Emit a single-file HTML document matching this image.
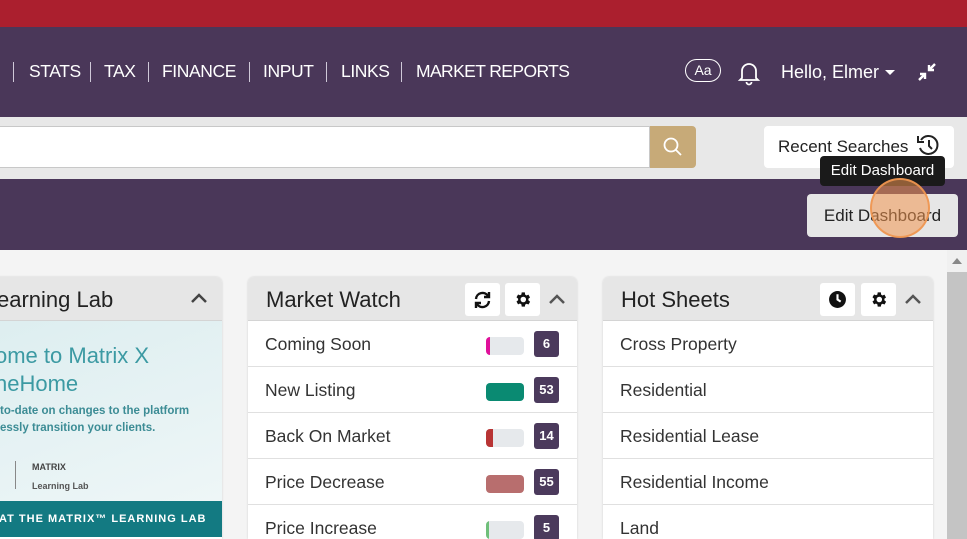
<!DOCTYPE html>
<html><head><meta charset="utf-8"><style>
*{box-sizing:border-box;margin:0;padding:0}
body{width:967px;height:539px;overflow:hidden;position:relative;background:#f4f4f4;font-family:"Liberation Sans",sans-serif;color:#333}
.a{position:absolute}
.nv{position:absolute;color:#fff;font-size:17.5px;top:61px;white-space:nowrap;letter-spacing:-0.4px}
.sp{position:absolute;top:62px;width:1px;height:20px;background:#cfc8d8}
.card{background:#fff;border-radius:6px 6px 0 0;overflow:hidden;box-shadow:0 0 2px rgba(0,0,0,.15)}
.hd{height:44px;background:#e6e6e6;border-bottom:1px solid #d4d4d4;position:relative}
.hd .t{position:absolute;left:18px;top:10px;font-size:22px;color:#222}
.ib{position:absolute;top:6px;width:35px;height:33px;background:#fff;border-radius:3px}
.row{height:46px;border-bottom:1px solid #e0e0e0;position:relative;font-size:17.5px;color:#333}
.row span.l{position:absolute;left:17px;top:13px}
.bar{position:absolute;left:238px;top:16px;width:38px;height:18px;border-radius:4px;background:#e6e9ec;overflow:hidden}
.bdg{position:absolute;right:18px;top:10px;height:26px;min-width:25px;padding:0 5px;border-radius:3px;background:#4b3a5c;color:#fff;font-size:13px;font-weight:bold;text-align:center;line-height:26px}
</style></head><body>
<div class="a" style="left:0;top:0;width:967px;height:27px;background:#ab1f2e"></div>
<div class="a" style="left:0;top:27px;width:967px;height:90px;background:#4a3759"></div>
<div class="sp" style="left:13px"></div><div class="nv" style="left:29px">STATS</div>
<div class="sp" style="left:90px"></div><div class="nv" style="left:104px">TAX</div>
<div class="sp" style="left:148px"></div><div class="nv" style="left:162px">FINANCE</div>
<div class="sp" style="left:249px"></div><div class="nv" style="left:263px">INPUT</div>
<div class="sp" style="left:326px"></div><div class="nv" style="left:341px">LINKS</div>
<div class="sp" style="left:401px"></div><div class="nv" style="left:416px;letter-spacing:-0.6px">MARKET REPORTS</div>
<div class="a" style="left:685px;top:59px;width:36px;height:23px;border:1.5px solid #fff;border-radius:12px;color:#fff;font-size:14px;text-align:center;line-height:20px">Aa</div>
<svg class="a" style="left:737px;top:60px" width="24" height="26" viewBox="0 0 24 26"><path d="M5 18V11a7 7 0 0 1 14 0v7l2 2H3z" fill="none" stroke="#fff" stroke-width="1.8"/><path d="M9.5 22a2.5 2.5 0 0 0 5 0" fill="none" stroke="#fff" stroke-width="1.8"/></svg>
<div class="a" style="left:781px;top:62px;color:#fff;font-size:18px">Hello, Elmer</div>
<div class="a" style="left:885px;top:70px;border-left:5px solid transparent;border-right:5px solid transparent;border-top:5px solid #fff"></div>
<svg class="a" style="left:918px;top:63px" width="18" height="18" viewBox="0 0 18 18"><path d="M17 1l-6 6M11 2v5h5M1 17l6-6M2 11h5v5" stroke="#fff" stroke-width="2.4" fill="none"/></svg>
<div class="a" style="left:0;top:117px;width:967px;height:62px;background:#e8e8e8"></div>
<div class="a" style="left:-4px;top:126px;width:654px;height:42px;background:#fff;border:1px solid #c8c8c8"></div>
<div class="a" style="left:650px;top:126px;width:46px;height:42px;background:#c7aa78;border-radius:0 4px 4px 0"></div>
<svg class="a" style="left:662px;top:136px" width="22" height="22" viewBox="0 0 22 22"><circle cx="9" cy="9" r="6.5" fill="none" stroke="#fff" stroke-width="1.8"/><path d="M14 14l5 5" stroke="#fff" stroke-width="1.8"/></svg>
<div class="a" style="left:764px;top:126px;width:190px;height:42px;background:#fff;border-radius:4px"></div>
<div class="a" style="left:778px;top:137px;font-size:17px;color:#222">Recent Searches</div>
<svg class="a" style="left:915px;top:133px" width="26" height="24" viewBox="0 0 26 24"><path d="M6 7a9 9 0 1 1-1 8" fill="none" stroke="#222" stroke-width="2"/><path d="M3 3v6h6" fill="none" stroke="#222" stroke-width="2"/><path d="M14 7v6l3 3" fill="none" stroke="#222" stroke-width="2"/></svg>
<div class="a" style="left:0;top:179px;width:967px;height:71px;background:#4a3759"></div>
<div class="a" style="left:807px;top:194px;width:151px;height:43px;background:#e6e6e6;border-radius:4px;font-size:17px;color:#222;line-height:43px;text-align:center">Edit Dashboard</div>
<div class="a" style="left:820px;top:156px;width:125px;height:30px;background:#1a1a1a;border-radius:4px;color:#fff;font-size:15px;line-height:30px;text-align:center">Edit Dashboard</div>
<div class="a" style="left:870px;top:178px;width:60px;height:60px;border-radius:50%;background:rgba(240,150,80,.55);border:2px solid rgba(240,150,80,.9)"></div>
<div class="a" style="left:947px;top:250px;width:20px;height:289px;background:#c4c4c4"></div>
<div class="a" style="left:947px;top:250px;width:20px;height:22px;background:#f0f0f0"></div>
<div class="a" style="left:952px;top:258px;border-left:5px solid transparent;border-right:5px solid transparent;border-bottom:6px solid #888"></div>

<!-- Learning lab -->
<div class="a card" style="left:-10px;top:277px;width:232px;height:262px">
<div class="hd"><div class="t" style="left:7px">earning Lab</div>
<svg class="a" style="left:200px;top:15px" width="18" height="12" viewBox="0 0 18 12"><path d="M2 10l7-7 7 7" fill="none" stroke="#444" stroke-width="2.5"/></svg></div>
<div style="position:absolute;top:44px;left:0;width:232px;height:180px;background:linear-gradient(160deg,#ddeef0,#eef6f7)"></div>
<div class="a" style="left:5px;top:65px;font-size:22px;color:#3c9aa3;line-height:28px;white-space:nowrap">ome to Matrix X<br>neHome</div>
<div class="a" style="left:10px;top:126px;font-size:11.5px;font-weight:bold;color:#3c8c95;line-height:17px;white-space:nowrap">to-date on changes to the platform<br>essly transition your clients.</div>
<div class="a" style="left:25px;top:184px;width:1px;height:28px;background:#888"></div>
<div class="a" style="left:42px;top:185px;font-size:9px;font-weight:bold;color:#444">MATRIX</div>
<div class="a" style="left:42px;top:204px;font-size:9px;font-weight:bold;color:#555">Learning Lab</div>
<div class="a" style="left:0;top:224px;width:232px;height:36px;background:#137a82;color:#fff;font-size:11px;font-weight:bold;letter-spacing:1px;line-height:36px;padding-left:9px;white-space:nowrap">AT THE MATRIX™ LEARNING LAB</div>
</div>

<!-- Market watch -->
<div class="a card" style="left:248px;top:277px;width:329px;height:262px">
<div class="hd"><div class="t">Market Watch</div>
<div class="ib" style="left:217px"><svg style="margin:8px 8px" width="19" height="18" viewBox="0 0 19 18"><path d="M3 8a6.5 6.5 0 0 1 12-3M16 10a6.5 6.5 0 0 1-12 3" fill="none" stroke="#111" stroke-width="2.4"/><path d="M16 1v5h-5M3 17v-5h5" fill="none" stroke="#111" stroke-width="2.4"/></svg></div>
<div class="ib" style="left:257px"><svg style="margin:7px 8px" width="19" height="19" viewBox="0 0 24 24"><path fill="#111" d="M19.4 13a7.5 7.5 0 0 0 0-2l2.1-1.6-2-3.5-2.5 1a7 7 0 0 0-1.7-1L15 3h-4l-.4 2.7a7 7 0 0 0-1.7 1l-2.5-1-2 3.5L6.5 11a7.5 7.5 0 0 0 0 2l-2.1 1.6 2 3.5 2.5-1a7 7 0 0 0 1.7 1L11 21h4l.4-2.7a7 7 0 0 0 1.7-1l2.5 1 2-3.5zM13 15.5a3.5 3.5 0 1 1 0-7 3.5 3.5 0 0 1 0 7z"/></svg></div>
<svg class="a" style="left:300px;top:16px" width="18" height="12" viewBox="0 0 18 12"><path d="M2 10l7-7 7 7" fill="none" stroke="#555" stroke-width="2.5"/></svg></div>
<div class="row"><span class="l">Coming Soon</span><div class="bar"><div style="width:4px;height:18px;background:#e0109a"></div></div><div class="bdg">6</div></div>
<div class="row"><span class="l">New Listing</span><div class="bar" style="background:#0a8a72"></div><div class="bdg">53</div></div>
<div class="row"><span class="l">Back On Market</span><div class="bar"><div style="width:7px;height:18px;background:#b83434"></div></div><div class="bdg">14</div></div>
<div class="row"><span class="l">Price Decrease</span><div class="bar" style="background:#b86e6e"></div><div class="bdg">55</div></div>
<div class="row"><span class="l">Price Increase</span><div class="bar"><div style="width:3px;height:18px;background:#6fbf7a"></div></div><div class="bdg">5</div></div>
</div>

<!-- Hot sheets -->
<div class="a card" style="left:603px;top:277px;width:330px;height:262px">
<div class="hd"><div class="t">Hot Sheets</div>
<div class="ib" style="left:217px"><svg style="margin:7px 8px" width="19" height="19" viewBox="0 0 18 18"><circle cx="9" cy="9" r="8" fill="#111"/><path d="M9 4v5l3 2" stroke="#fff" stroke-width="2" fill="none"/></svg></div>
<div class="ib" style="left:258px"><svg style="margin:7px 8px" width="19" height="19" viewBox="0 0 24 24"><path fill="#111" d="M19.4 13a7.5 7.5 0 0 0 0-2l2.1-1.6-2-3.5-2.5 1a7 7 0 0 0-1.7-1L15 3h-4l-.4 2.7a7 7 0 0 0-1.7 1l-2.5-1-2 3.5L6.5 11a7.5 7.5 0 0 0 0 2l-2.1 1.6 2 3.5 2.5-1a7 7 0 0 0 1.7 1L11 21h4l.4-2.7a7 7 0 0 0 1.7-1l2.5 1 2-3.5zM13 15.5a3.5 3.5 0 1 1 0-7 3.5 3.5 0 0 1 0 7z"/></svg></div>
<svg class="a" style="left:301px;top:16px" width="18" height="12" viewBox="0 0 18 12"><path d="M2 10l7-7 7 7" fill="none" stroke="#555" stroke-width="2.5"/></svg></div>
<div class="row"><span class="l">Cross Property</span></div>
<div class="row"><span class="l">Residential</span></div>
<div class="row"><span class="l">Residential Lease</span></div>
<div class="row"><span class="l">Residential Income</span></div>
<div class="row"><span class="l">Land</span></div>
</div>
</body></html>
